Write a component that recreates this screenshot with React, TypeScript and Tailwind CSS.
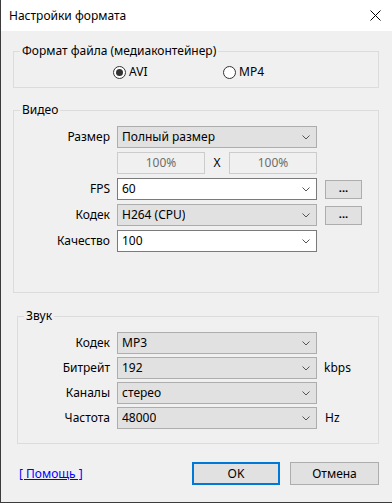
import React from "react";

const font = { fontFamily: '"Noto Sans", "Open Sans", sans-serif' };

function Chevron() {
  return (
    <svg width="8" height="5" viewBox="0 0 8 5" className="shrink-0">
      <path d="M0.5 0.5 L4 4 L7.5 0.5" fill="none" stroke="#555" strokeWidth="1" />
    </svg>
  );
}

function Combo({ value, editable }: { value: string; editable?: boolean }) {
  return (
    <div
      className={
        "h-[22px] w-[200px] flex items-center justify-between pl-[4px] pr-[6px] border " +
        (editable ? "bg-white border-[#7a7a7a]" : "bg-[#e1e1e1] border-[#adadad]")
      }
    >
      <span className="truncate">{value}</span>
      <Chevron />
    </div>
  );
}

function DotsButton() {
  return (
    <div className="h-[19px] w-[37px] ml-[8px] bg-[#e1e1e1] border border-[#adadad] flex items-center justify-center text-[11px] font-bold leading-none pb-[3px]">
      ...
    </div>
  );
}

function Radio({ checked, label }: { checked?: boolean; label: string }) {
  return (
    <div className="flex items-center gap-[3px]">
      <span className="w-[13px] h-[13px] rounded-full border border-[#333] bg-white flex items-center justify-center">
        {checked && <span className="w-[7px] h-[7px] rounded-full bg-[#333]" />}
      </span>
      <span>{label}</span>
    </div>
  );
}

function Row({ label, labelWidth, children }: { label: string; labelWidth: string; children: React.ReactNode }) {
  return (
    <div className="flex items-center">
      <div className={labelWidth + " text-right pr-[7px] shrink-0"}>{label}</div>
      {children}
    </div>
  );
}

export default function App() {
  return (
    <div
      className="w-[392px] h-[503px] bg-[#f0f0f0] border-l border-b border-[#3c3c3c] flex flex-col text-[12px] text-black leading-[16px]"
      style={font}
    >
      <div className="h-[31px] bg-white flex items-center justify-between pl-[8px] pr-[11px] shrink-0">
        <span>Настройки формата</span>
        <svg width="11" height="11" viewBox="0 0 11 11">
          <path d="M0.5 0.5 L10.5 10.5 M10.5 0.5 L0.5 10.5" stroke="#000" strokeWidth="1" />
        </svg>
      </div>

      <div className="flex flex-col pl-[12px] pr-[13px]">
        <fieldset className="mt-[12px] border border-[#dcdcdc] px-0 pt-[5px] pb-[7px]">
          <legend className="ml-[6px] px-[2px]">Формат файла (медиаконтейнер)</legend>
          <div className="flex items-center pl-[99px]">
            <div className="w-[110px]">
              <Radio checked label="AVI" />
            </div>
            <Radio label="MP4" />
          </div>
        </fieldset>

        <fieldset className="mt-[14px] border border-[#dcdcdc] pt-[8px] pb-[40px]">
          <legend className="ml-[6px] px-[2px]">Видео</legend>
          <div className="flex flex-col gap-[4px]">
            <Row label="Размер" labelWidth="w-[103px]">
              <Combo value="Полный размер" />
            </Row>
            <Row label="" labelWidth="w-[103px]">
              <div className="h-[22px] w-[88px] bg-[#f0f0f0] border border-[#cccccc] text-[#6d6d6d] flex items-center justify-center">
                100%
              </div>
              <div className="w-[24px] text-center">X</div>
              <div className="h-[22px] w-[88px] bg-[#f0f0f0] border border-[#cccccc] text-[#6d6d6d] flex items-center justify-center">
                100%
              </div>
            </Row>
            <Row label="FPS" labelWidth="w-[103px]">
              <Combo value="60" editable />
              <DotsButton />
            </Row>
            <Row label="Кодек" labelWidth="w-[103px]">
              <Combo value="H264 (CPU)" />
              <DotsButton />
            </Row>
            <Row label="Качество" labelWidth="w-[103px]">
              <Combo value="100" editable />
            </Row>
          </div>
        </fieldset>

        <fieldset className="mt-[15px] ml-[4px] border border-[#dcdcdc] pt-[8px] pb-[14px]">
          <legend className="ml-[6px] px-[2px]">Звук</legend>
          <div className="flex flex-col gap-[3px]">
            <Row label="Кодек" labelWidth="w-[99px]">
              <Combo value="MP3" />
            </Row>
            <Row label="Битрейт" labelWidth="w-[99px]">
              <Combo value="192" />
              <span className="ml-[7px]">kbps</span>
            </Row>
            <Row label="Каналы" labelWidth="w-[99px]">
              <Combo value="стерео" />
            </Row>
            <Row label="Частота" labelWidth="w-[99px]">
              <Combo value="48000" />
              <span className="ml-[8px]">Hz</span>
            </Row>
          </div>
        </fieldset>

        <div className="mt-[18px] flex items-center">
          <span className="ml-[6px] text-[#0000ff] underline">[ Помощь ]</span>
          <div className="ml-auto flex gap-[10px]">
            <div className="h-[23px] w-[88px] bg-[#e1e1e1] border-2 border-[#0078d7] flex items-center justify-center">
              OK
            </div>
            <div className="h-[23px] w-[89px] bg-[#e1e1e1] border border-[#adadad] flex items-center justify-center">
              Отмена
            </div>
          </div>
        </div>
      </div>
    </div>
  );
}
